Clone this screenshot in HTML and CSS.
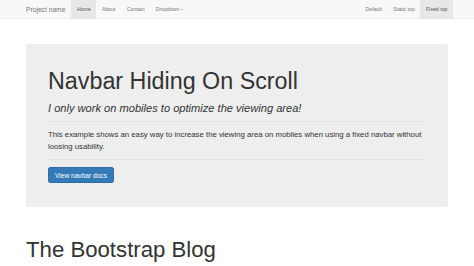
FILE: index.html
```html
<!DOCTYPE html>
<html lang="en">
<head>
<meta charset="utf-8">
<title>Navbar Hiding On Scroll</title>
<link rel="stylesheet" href="styles.css">
</head>
<body>
<nav class="navbar">
  <div class="nav-inner">
    <a class="brand" href="#">Project name</a>
    <ul class="nav">
      <li><a class="active" href="#">Home</a></li>
      <li><a href="#">About</a></li>
      <li><a href="#">Contact</a></li>
      <li><a href="#">Dropdown <span class="caret"></span></a></li>
    </ul>
    <ul class="nav nav-right">
      <li><a href="#">Default</a></li>
      <li><a href="#">Static top</a></li>
      <li><a class="active" href="#">Fixed top</a></li>
    </ul>
  </div>
</nav>
<main class="container">
  <section class="jumbotron">
    <h1 class="jumbo-title">Navbar Hiding On Scroll</h1>
    <p class="jumbo-sub">I only work on mobiles to optimize the viewing area!</p>
    <hr class="jumbo-rule">
    <p class="jumbo-text">This example shows an easy way to increase the viewing area on mobiles when using a fixed navbar without loosing usability.</p>
    <hr class="jumbo-rule">
    <a class="btn" href="#">View navbar docs</a>
  </section>
  <h1 class="blog-title">The Bootstrap Blog</h1>
  <p class="blog-desc">The official example template of creating a blog with Bootstrap.</p>
</main>
</body>
</html>
```
FILE: styles.css
```css
* { box-sizing: border-box; }
html, body { margin: 0; padding: 0; }
body {
  font-family: "Liberation Sans", Arial, Helvetica, sans-serif;
  color: #333;
  background: #fff;
  overflow: hidden;
}
a { text-decoration: none; }

.navbar {
  height: 19px;
  background: #f8f8f8;
  border-bottom: 1px solid #eeeeee;
}
.nav-inner {
  display: flex;
  align-items: stretch;
  height: 18.5px;
  padding: 0 21px 0 20.4px;
}
.brand {
  display: flex;
  align-items: center;
  padding: 0 5.6px;
  font-size: 6.7px;
  color: #777;
  margin-right: 0.4px;
}
.nav {
  display: flex;
  list-style: none;
  margin: 0;
  padding: 0;
}
.nav-right { margin-left: auto; }
.nav li { display: flex; }
.nav a {
  display: flex;
  align-items: center;
  padding: 0 5.6px;
  font-size: 5.2px;
  color: #777;
}
.nav a.active {
  background: #e7e7e7;
  color: #555;
}
.caret {
  display: inline-block;
  width: 0;
  height: 0;
  margin-left: 1.5px;
  border-top: 1.5px solid #777;
  border-left: 1.5px solid transparent;
  border-right: 1.5px solid transparent;
}

.container {
  padding: 25px 26px 0 26px;
}
.jumbotron {
  background: #eee;
  border-radius: 2.2px;
  padding: 18px 22px 24px 22px;
}
.jumbo-title {
  margin: 6.5px 0 0 0;
  font-size: 23.3px;
  line-height: 1.1;
  font-weight: 500;
  color: #333;
}
.jumbo-sub {
  margin: 8px 0 0 0;
  font-size: 11.1px;
  line-height: 1.1;
  font-style: italic;
}
.jumbo-rule {
  border: 0;
  border-top: 1px solid #e4e4e4;
  margin: 6.3px 0 0 0;
}
.jumbo-text {
  margin: 7.5px 0 6px 0;
  font-size: 7.77px;
  line-height: 12px;
}
.jumbo-text + .jumbo-rule { margin-top: 0; }
.btn {
  display: inline-block;
  margin-top: 7.2px;
  height: 16px;
  line-height: 16px;
  padding: 0 6px;
  font-size: 6.6px;
  color: #fff;
  background: #337ab7;
  border: 0.5px solid #2e6da4;
  border-radius: 2.2px;
}
.blog-title {
  margin: 31px 0 0 0;
  font-size: 22.2px;
  line-height: 1.1;
  font-weight: 500;
  color: #333;
}
.blog-desc {
  margin: 2px 0 0 0;
  font-size: 6.9px;
  line-height: 1.2;
  color: #999;
}
```
